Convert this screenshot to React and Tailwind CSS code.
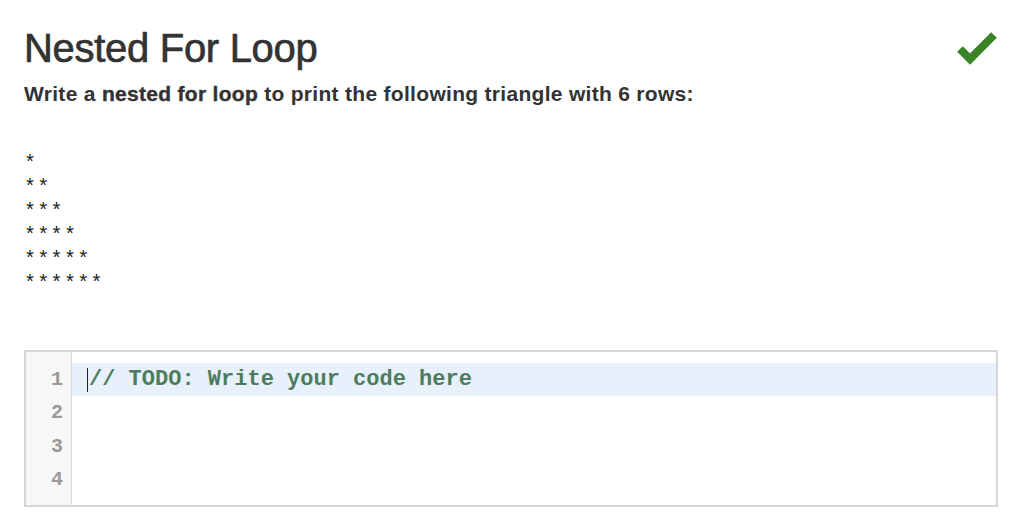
import React from "react";

function Check() {
  return (
    <svg width="44" height="36" viewBox="0 0 44 36" className="mt-[4px]">
      <path d="M4 19 L14 29 L38 5" fill="none" stroke="#3a8428" strokeWidth="8" />
    </svg>
  );
}

export default function App() {
  const rows = [1, 2, 3, 4, 5, 6];
  const lines = [1, 2, 3, 4];

  return (
    <div className="w-[1024px] h-[524px] bg-white px-[24px] pt-[26px] text-[#333] font-['Liberation_Sans',Arial,sans-serif]">
      {/* header */}
      <div className="flex justify-between items-start">
        <h1 className="text-[40px] leading-[44px] tracking-[-0.3px] [-webkit-text-stroke:0.7px_#333]">Nested For Loop</h1>
        <Check />
      </div>
      <p className="text-[21px] leading-[26px] mt-[11px] font-bold tracking-[0.3px]">
        Write a <b className="[-webkit-text-stroke:0.4px_#333]">nested for loop</b> to print the following triangle with 6 rows:
      </p>

      {/* triangle */}
      <div className="mt-[45px] font-['Liberation_Mono',monospace] text-[20px] leading-[24px] tracking-[1.3px] text-[#222]">
        {rows.map((n) => (
          <div key={n}>{"*".repeat(n)}</div>
        ))}
      </div>

      {/* editor */}
      <div className="mt-[54px] w-[974px] h-[157px] border-2 border-[#d6d6d6] flex font-['Liberation_Mono',monospace] font-bold">
        <div className="w-[46px] bg-[#f7f7f7] border-r border-[#dddddd] pt-[11px] text-right pr-[8px] text-[20px] text-[#999]">
          {lines.map((n) => (
            <div key={n} className="h-[33.3px] leading-[33px]">{n}</div>
          ))}
        </div>
        <div className="flex-1 pt-[11px]">
          <div className="h-[33.3px] bg-[#e8f0fb] flex items-center pl-[15px] text-[22px] text-[#4c7d5c]">
            <span className="w-[1px] h-[24px] bg-[#222] mr-[1px]"></span>
            <span className="whitespace-pre">// TODO: Write your code here</span>
          </div>
        </div>
      </div>
    </div>
  );
}
